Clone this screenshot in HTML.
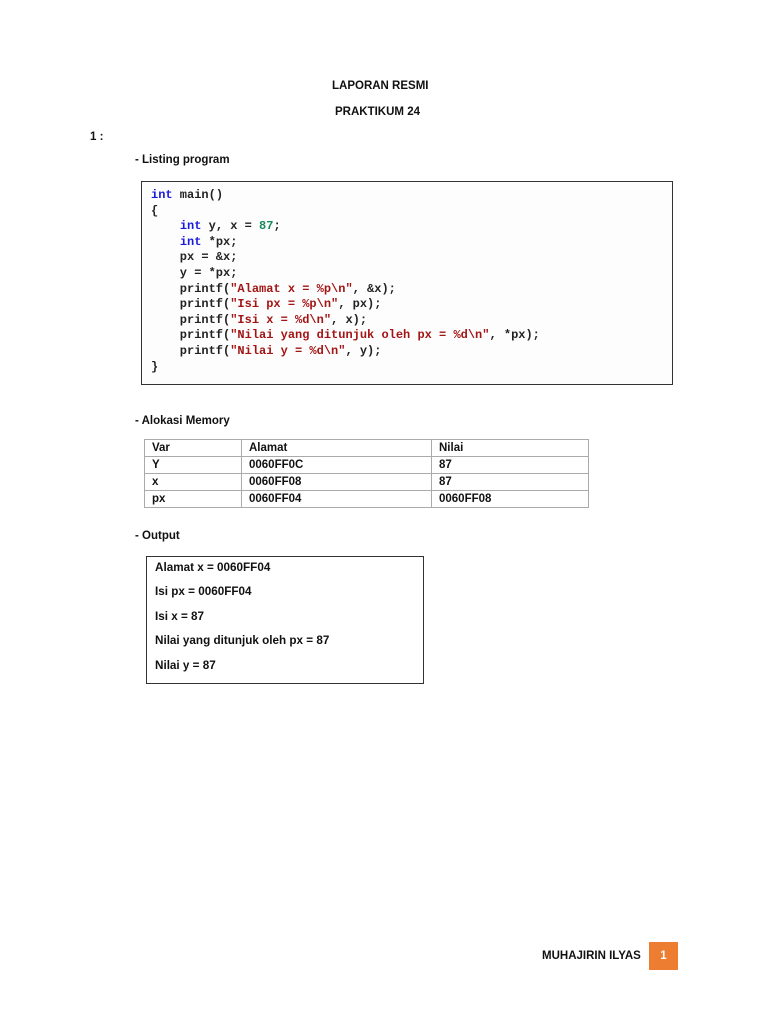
<!DOCTYPE html>
<html><head><meta charset="utf-8"><style>
body{margin:0;width:768px;height:1024px;background:#fff;position:relative;font-family:"Liberation Sans",sans-serif;font-weight:bold;font-size:11.5px;color:#111;overflow:hidden}
.a{position:absolute;white-space:pre}
.code{position:absolute;left:141px;top:181px;width:532px;height:204px;border:1px solid #333;box-sizing:border-box;background:#fdfdfd}
.code pre{position:absolute;left:9px;top:6px;margin:0;font-family:"Liberation Mono",monospace;font-size:12px;line-height:15.6px;color:#222;font-weight:bold}
.k{color:#1a1adc}.n{color:#1a8a5a}.s{color:#a31515}
table{position:absolute;left:144px;top:439px;width:445px;border-collapse:collapse;font-size:11.5px}
td{border:1px solid #aaa;height:16px;padding:0 0 0 7px;line-height:16px}
.out{position:absolute;left:146px;top:556px;width:278px;height:128px;border:1px solid #333;box-sizing:border-box;font-size:11.7px}
.out div{position:absolute;left:8px}
</style></head><body>
<div class="a" style="left:332px;top:80px">LAPORAN RESMI</div>
<div class="a" style="left:335px;top:106px">PRAKTIKUM 24</div>
<div class="a" style="left:90px;top:131px">1 :</div>
<div class="a" style="left:135px;top:154px">- Listing program</div>
<div class="code"><pre><span class="k">int</span> main()
{
    <span class="k">int</span> y, x = <span class="n">87</span>;
    <span class="k">int</span> *px;
    px = &amp;x;
    y = *px;
    printf(<span class="s">"Alamat x = %p\n"</span>, &amp;x);
    printf(<span class="s">"Isi px = %p\n"</span>, px);
    printf(<span class="s">"Isi x = %d\n"</span>, x);
    printf(<span class="s">"Nilai yang ditunjuk oleh px = %d\n"</span>, *px);
    printf(<span class="s">"Nilai y = %d\n"</span>, y);
}</pre></div>
<div class="a" style="left:135px;top:415px">- Alokasi Memory</div>
<table>
<tr><td style="width:89px">Var</td><td style="width:182px">Alamat</td><td>Nilai</td></tr>
<tr><td>Y</td><td>0060FF0C</td><td>87</td></tr>
<tr><td>x</td><td>0060FF08</td><td>87</td></tr>
<tr><td>px</td><td>0060FF04</td><td>0060FF08</td></tr>
</table>
<div class="a" style="left:135px;top:530px">- Output</div>
<div class="out">
<div style="top:4px">Alamat x = 0060FF04</div>
<div style="top:28px">Isi px = 0060FF04</div>
<div style="top:53px">Isi x = 87</div>
<div style="top:77px">Nilai yang ditunjuk oleh px = 87</div>
<div style="top:102px">Nilai y = 87</div>
</div>
<div class="a" style="left:542px;top:950px">MUHAJIRIN ILYAS</div>
<div style="position:absolute;left:649px;top:942px;width:29px;height:28px;background:#ed7d31;color:#fff;text-align:center;line-height:28px">1</div>
</body></html>
